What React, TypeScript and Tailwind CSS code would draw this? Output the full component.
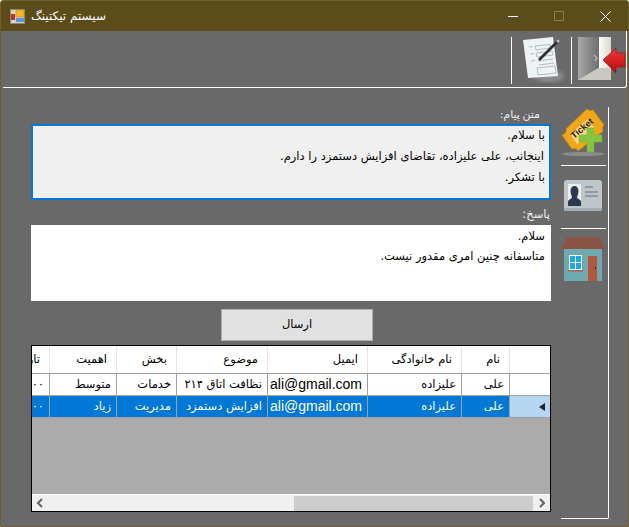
const font = { fontFamily: '"DejaVu Sans", "Noto Sans", sans-serif' }

const columns = [
  { title: 'نام', w: 'w-[48px]' },
  { title: 'نام خانوادگی', w: 'w-[94px]' },
  { title: 'ایمیل', w: 'w-[100px]' },
  { title: 'موضوع', w: 'w-[91px]' },
  { title: 'بخش', w: 'w-[60px]' },
  { title: 'اهمیت', w: 'w-[67px]' },
  { title: 'تاریخ', w: 'w-[60px]' },
]

const rows = [
  ['علی', 'علیزاده', 'ali@gmail.com', 'نظافت اتاق ۲۱۴', 'خدمات', 'متوسط', '۰۰'],
  ['علی', 'علیزاده', 'ali@gmail.com', 'افزایش دستمزد', 'مدیریت', 'زیاد', '۰۰'],
]

function AppIcon() {
  return (
    <svg width="15" height="15" viewBox="0 0 15 15" className="shrink-0">
      <rect x="0.5" y="0.5" width="14" height="14" fill="#d8d4c4" stroke="#8d8a7c" />
      <rect x="6" y="1" width="8" height="7" fill="#f6b820" stroke="#b57f10" strokeWidth="0.5" />
      <rect x="1" y="5" width="4" height="6" fill="#c9302c" />
      <rect x="6" y="9" width="8" height="4" fill="#5c94e0" />
    </svg>
  )
}

function NoteIcon() {
  return (
    <svg width="44" height="46" viewBox="0 0 44 46">
      <defs>
        <filter id="noteBlur"><feGaussianBlur stdDeviation="2" /></filter>
      </defs>
      <ellipse cx="26" cy="39" rx="15" ry="6" fill="#8f8f8f" filter="url(#noteBlur)" />
      <path d="M0 3 L30 0 L35 39 L5 41 Z" fill="#eef3f5" />
      <g stroke="#9aa4a8" strokeWidth="0.7" fill="none">
        <path d="M6 10 L10 9.5 M12 9 L27 7.5 L28 11 L13 13 Z" />
        <path d="M7 17 L11 16.5 M13 16 L29 14 L30 18 L14 20 Z" />
        <path d="M8 24 L12 23.5 M15 24 L30 22 M16 28 L31 26" />
        <path d="M14 31 L32 29 L33 36 L15 38 Z" />
      </g>
      <path d="M16 23 L36 3" stroke="#2d2d2d" strokeWidth="2.6" />
      <path d="M34 5 L36 3" stroke="#bbbbbb" strokeWidth="2.6" />
    </svg>
  )
}

function ExitIcon() {
  return (
    <svg width="48" height="46" viewBox="0 0 48 46">
      <defs>
        <linearGradient id="doorBack" x1="0" x2="1" y1="0" y2="0">
          <stop offset="0" stopColor="#9a9a9a" />
          <stop offset="0.6" stopColor="#ffffff" />
          <stop offset="1" stopColor="#d8d8d0" />
        </linearGradient>
        <linearGradient id="doorLeaf" x1="0" x2="1" y1="0" y2="0">
          <stop offset="0" stopColor="#a8a8a8" />
          <stop offset="1" stopColor="#6e6e6e" />
        </linearGradient>
        <linearGradient id="arrowRed" x1="0" x2="0" y1="0" y2="1">
          <stop offset="0" stopColor="#f23a3a" />
          <stop offset="1" stopColor="#b80808" />
        </linearGradient>
      </defs>
      <rect x="0" y="0" width="33" height="43" fill="url(#doorBack)" />
      <path d="M0 0 L21 0 L21 31 L0 43 Z" fill="url(#doorLeaf)" />
      <path d="M0 43 L21 31 L33 31 L33 43 Z" fill="#c9c9c2" />
      <path d="M16 18 L19 21 L17 24" stroke="#b5b5b5" strokeWidth="1.4" fill="none" />
      <path d="M25 23 L38 11 L38 16 L47 16 L47 30 L38 30 L38 36 Z" fill="url(#arrowRed)" stroke="#9c0a0a" strokeWidth="0.6" />
    </svg>
  )
}

function TicketIcon() {
  return (
    <svg width="44" height="48" viewBox="0 0 44 48">
      <ellipse cx="22" cy="46" rx="21" ry="2" fill="#8c8c8c" />
      <path d="M1 27 C4 26 6 24 5 21 L26 1 C28 3 30 3 32 2 L43 17 C41 19 41 21 42 23 L17 43 C16 40 13 40 11 41 Z" fill="#f0a818" stroke="#d28a10" />
      <path d="M9 26 L27 11 L34 21 L16 36 Z" fill="#f9d77a" />
      <text x="13" y="31" fontSize="9" fontWeight="700" fill="#222" transform="rotate(-40 13 31)" fontFamily="Liberation Sans, sans-serif">Ticket</text>
      <path d="M26 20 H33 V27 H41 V34 H33 V44 H26 V34 H18 V27 H26 Z" fill="#86c440" stroke="#74b036" strokeWidth="0.5" strokeLinejoin="round" />
    </svg>
  )
}

function CardIcon() {
  return (
    <svg width="38" height="32" viewBox="0 0 38 32">
      <rect x="0" y="0" width="38" height="31" rx="3" fill="#bfc6ca" />
      <rect x="0" y="28" width="38" height="3" rx="1.5" fill="#a5adb2" />
      <rect x="4" y="4" width="13" height="22" fill="#eceff0" />
      <path d="M4 26 V22 C4 19 8 19 8 17 C7 15 6.5 13 6.5 11 C6.5 8 8 6 10.5 6 C13 6 14.5 8 14.5 11 C14.5 13 14 15 13 17 C13 19 17 19 17 22 V26 Z" fill="#2a3a4f" />
      <rect x="21" y="6" width="8" height="2" fill="#8f999f" />
      <rect x="21" y="11" width="13" height="2" fill="#8f999f" />
      <rect x="21" y="15" width="13" height="2" fill="#8f999f" />
    </svg>
  )
}

function HouseIcon() {
  return (
    <svg width="44" height="44" viewBox="0 0 44 44">
      <rect x="3" y="11" width="38" height="33" fill="#6fa9ad" />
      <path d="M6 0 L38 0 L44 12 L0 12 Z" fill="#8a5547" />
      <rect x="8" y="18" width="13" height="15" fill="#eef4f6" />
      <g fill="#1ea7e8">
        <rect x="9" y="19" width="5" height="6" />
        <rect x="15" y="19" width="5" height="6" />
        <rect x="9" y="26" width="5" height="6" />
        <rect x="15" y="26" width="5" height="6" />
      </g>
      <rect x="7" y="33" width="15" height="1.5" fill="#9c6a58" />
      <rect x="27" y="19" width="9" height="25" fill="#b3573f" />
      <rect x="34" y="30" width="1" height="2" fill="#333" />
    </svg>
  )
}

export default function App() {
  return (
    <div className="flex h-[527px] w-[629px] flex-col overflow-hidden rounded-t-[3px] border border-[#6f5f2a] bg-[#696969]" style={font}>
      {/* title bar */}
      <div className="flex h-[30px] shrink-0 items-center bg-[#5b4c1a] pl-[9px] text-white">
        <AppIcon />
        <span className="ml-[6px] text-[12px]" dir="rtl">سیستم تیکتینگ</span>
        <div className="ml-auto flex h-full items-center">
          <div className="flex w-[46px] justify-center"><div className="h-px w-[10px] bg-white" /></div>
          <div className="flex w-[46px] justify-center"><div className="size-[10px] border border-[#8a7b4c]" /></div>
          <div className="flex w-[46px] justify-center">
            <svg width="11" height="11" viewBox="0 0 11 11" stroke="white" strokeWidth="1"><path d="M0.5 0.5 L10.5 10.5 M10.5 0.5 L0.5 10.5" /></svg>
          </div>
        </div>
      </div>

      {/* toolbar */}
      <div className="ml-[2px] mr-px flex h-[57px] shrink-0 items-center justify-end rounded-br-[3px] border-b border-r border-white">
        <div className="mt-[2px] flex h-[47px] items-center border-l border-white pl-[11px] pr-[4px]">
          <NoteIcon />
        </div>
        <div className="mt-[2px] flex h-[47px] items-center border-l border-white pl-[6px]">
          <ExitIcon />
        </div>
      </div>

      <div className="flex min-h-0 flex-1">
        {/* main column */}
        <div className="ml-[30px] flex w-[520px] flex-col text-[11.5px]" dir="rtl">
          <div className="mt-[18px] h-[18px] pr-[11px] text-[11px] leading-[18px] text-[#f0f0f0] [word-spacing:-1px]">متن پیام:</div>
          <div className="flex h-[76px] flex-col gap-[6px] border-2 border-[#0078d7] bg-[#f0f0f0] pr-[4px] pt-[2px] leading-[15px] text-black">
            <div>با سلام.</div>
            <div className="pr-[1px]">اینجانب، علی علیزاده، تقاضای افزایش دستمزد را دارم.</div>
            <div>با تشکر.</div>
          </div>
          <div className="mt-[3px] h-[22px] pr-[1px] leading-[22px] text-[#f0f0f0]">پاسخ:</div>
          <div className="flex h-[76px] flex-col gap-[5px] bg-white pr-[6px] pt-[4px] leading-[15px] text-black">
            <div>سلام.</div>
            <div>متاسفانه چنین امری مقدور نیست.</div>
          </div>
          <div className="mt-[8px] flex justify-start pr-[178px]">
            <button className="h-[32px] w-[152px] border border-[#adadad] bg-[#e1e1e1] text-black">ارسال</button>
          </div>

          {/* grid */}
          <div className="mt-[4px] flex h-[167px] flex-col overflow-hidden border border-black bg-[#ababab]">
            <div className="flex h-[28px] shrink-0 border-b border-[#a0a0a0] bg-white text-black">
              <div className="w-[41px] shrink-0 border-l border-[#e6e6e6]" />
              {columns.map((c) => (
                <div key={c.title} className={`${c.w} flex shrink-0 items-center justify-start whitespace-nowrap border-l border-[#e6e6e6] pr-[9px]`}>
                  {c.title}
                </div>
              ))}
            </div>
            {rows.map((row, i) => (
              <div key={i} className={`flex h-[22px] shrink-0 border-b border-[#a0a0a0] ${i === 1 ? 'bg-[#0078d7] text-white' : 'bg-white text-black'}`}>
                <div className={`flex w-[41px] shrink-0 items-center justify-start border-l border-[#a0a0a0] pr-[5px] ${i === 1 ? 'bg-[#b5d5f0]' : 'bg-white'}`}>
                  {i === 1 && <div className="size-0 shrink-0 border-y-[4px] border-r-[6px] border-y-transparent border-r-[#222]" />}
                </div>
                {row.map((cell, j) => (
                  <div
                    key={j}
                    className={`${columns[j].w} flex shrink-0 items-center overflow-hidden whitespace-nowrap border-l border-[#a0a0a0] pr-[5px] ${j === 2 ? 'text-[14px]' : ''}`}
                    style={j === 2 ? { fontFamily: '"Liberation Sans", sans-serif' } : undefined}
                  >
                    {cell}
                  </div>
                ))}
              </div>
            ))}
            <div className="flex-1" />
            <div className="flex h-[17px] shrink-0 items-center border-t border-white bg-[#f0f0f0]" dir="ltr">
              <svg width="17" height="16" viewBox="0 0 17 16" className="shrink-0"><path d="M10 4 L6 8 L10 12" stroke="#606060" strokeWidth="2" fill="none" /></svg>
              <div className="w-[245px] shrink-0" />
              <div className="h-[15px] flex-1 bg-[#cdcdcd]" />
              <svg width="17" height="16" viewBox="0 0 17 16" className="shrink-0"><path d="M7 4 L11 8 L7 12" stroke="#606060" strokeWidth="2" fill="none" /></svg>
            </div>
          </div>
        </div>

        {/* side bar */}
        <div className="mb-[7px] ml-[10px] mt-[19px] flex w-[48px] flex-col rounded-br-[2px] border-b border-r border-white">
          <div className="flex h-[58px] items-start justify-center pr-[3px] pt-px">
            <TicketIcon />
          </div>
          <div className="mr-[2px] h-px bg-white" />
          <div className="flex h-[62px] items-center justify-center pb-[3px] pr-[3px]">
            <CardIcon />
          </div>
          <div className="mr-[2px] h-px bg-white" />
          <div className="flex justify-center pr-[3px] pt-[8px]">
            <HouseIcon />
          </div>
        </div>
      </div>
    </div>
  )
}
